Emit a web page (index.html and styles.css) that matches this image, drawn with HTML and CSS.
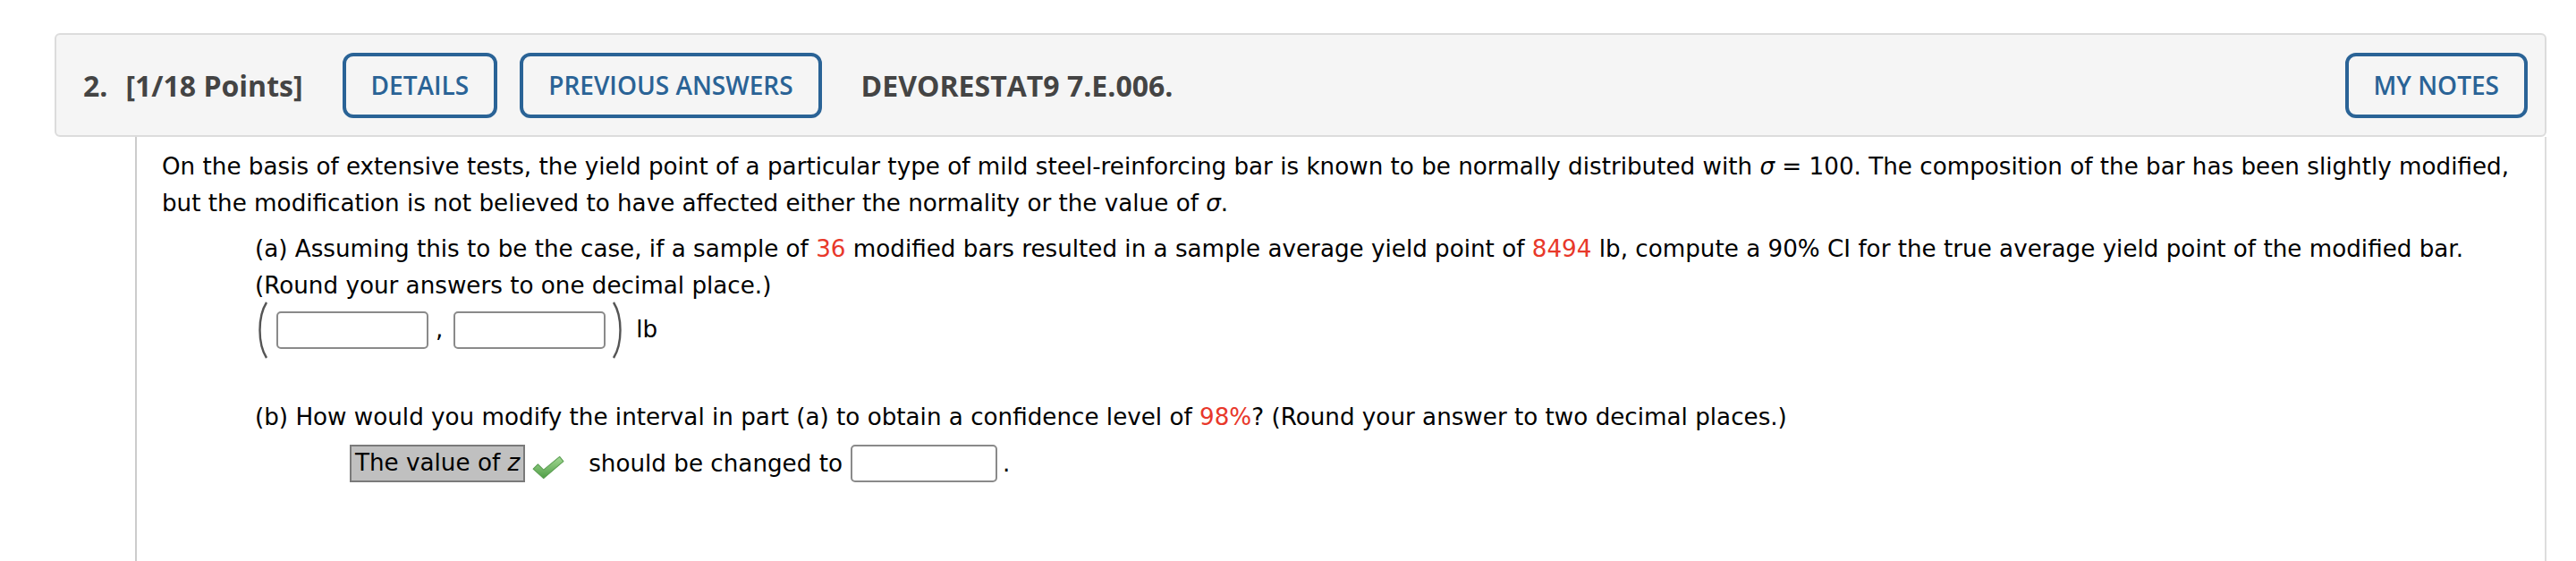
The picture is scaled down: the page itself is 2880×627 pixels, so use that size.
FILE: index.html
```html
<!DOCTYPE html>
<html lang="en">
<head>
<meta charset="utf-8">
<title>Question 2</title>
<link rel="stylesheet" href="styles.css">
</head>
<body>
<div class="question">
  <div class="qheader">
    <span class="qnum">2.</span>
    <span class="qpts">[1/18 Points]</span>
    <button class="qbtn qbtn-details">DETAILS</button>
    <button class="qbtn qbtn-prev">PREVIOUS ANSWERS</button>
    <span class="qtitle">DEVORESTAT9 7.E.006.</span>
    <button class="qbtn qbtn-notes">MY NOTES</button>
  </div>
  <div class="qbody">
    <p class="intro">On the basis of extensive tests, the yield point of a particular type of mild steel-reinforcing bar is known to be normally distributed with <i>σ</i> = 100. The composition of the bar has been slightly modified, but the modification is not believed to have affected either the normality or the value of <i>σ</i>.</p>
    <div class="part">
      <p class="ptext">(a) Assuming this to be the case, if a sample of <span class="red">36</span> modified bars resulted in a sample average yield point of <span class="red">8494</span> lb, compute a 90% CI for the true average yield point of the modified bar. (Round your answers to one decimal place.)</p>
      <div class="interval">
        <svg class="paren" width="16" height="66" viewBox="0 0 16 66"><path d="M13 2 C3 18 3 48 13 64" fill="none" stroke="#555" stroke-width="2.4"/></svg>
        <span class="ansbox"></span>
        <span class="comma">,</span>
        <span class="ansbox"></span>
        <svg class="paren" width="16" height="66" viewBox="0 0 16 66"><path d="M3 2 C13 18 13 48 3 64" fill="none" stroke="#555" stroke-width="2.4"/></svg>
        <span class="unit">lb</span>
      </div>
    </div>
    <div class="part part-b">
      <p class="ptext">(b) How would you modify the interval in part (a) to obtain a confidence level of <span class="red">98%</span>? (Round your answer to two decimal places.)</p>
      <div class="zrow">
        <span class="zsel">The value of <i>z</i></span>
        <svg class="check" width="38" height="30" viewBox="0 0 36 28">
          <defs>
            <linearGradient id="cg" x1="0" y1="0" x2="0" y2="1">
              <stop offset="0" stop-color="#a3d993"/>
              <stop offset="1" stop-color="#4f9d46"/>
            </linearGradient>
          </defs>
          <path d="M2 16 L7 11 L13 17 L30 3 L34 8 L13 26 Z" fill="url(#cg)" stroke="#5b9e52" stroke-width="1" stroke-linejoin="round"/>
        </svg>
        <span class="ztext">should be changed to</span>
        <span class="ansbox ansbox-z"></span>
        <span class="dot">.</span>
      </div>
    </div>
  </div>
</div>
</body>
</html>
```
FILE: styles.css
```css
html, body {
  margin: 0;
  padding: 0;
  background: #ffffff;
  height: 100%;
}
body {
  font-family: "DejaVu Sans", Verdana, sans-serif;
  color: #000;
}
.question {
  margin-left: 61px;
  width: 2786px;
  padding-top: 37px;
  display: flex;
  flex-direction: column;
  height: 100%;
  box-sizing: border-box;
}
.qheader {
  box-sizing: border-box;
  height: 116px;
  background: #f5f5f5;
  border: 2px solid #dcdcdc;
  border-radius: 6px;
  display: flex;
  align-items: center;
  padding: 0 19px 0 30px;
  font-family: "Open Sans", "Noto Sans", sans-serif;
  color: #444;
  flex: none;
}
.qnum {
  font-size: 32px;
  font-weight: 700;
  margin-right: 20px;
}
.qpts {
  font-size: 32px;
  font-weight: 700;
  margin-right: 44px;
}
.qbtn {
  font-family: "Open Sans", "Noto Sans", sans-serif;
  font-size: 28px;
  font-weight: 600;
  color: #2a6396;
  background: transparent;
  border: 4px solid #2a6396;
  border-radius: 12px;
  height: 73px;
  padding: 0 28px;
  box-sizing: border-box;
}
.qbtn-prev {
  margin-left: 25px;
}
.qtitle {
  font-size: 32px;
  font-weight: 700;
  margin-left: 44px;
}
.qbtn-notes {
  margin-left: auto;
}
.qbody {
  flex: 1;
  margin-left: 90px;
  border-left: 2px solid #cccccc;
  border-right: 2px solid #dddddd;
  padding: 13px 20px 0 28px;
  font-size: 26.2px;
  line-height: 41px;
}
.intro {
  margin: 0;
}
.part {
  margin: 10px 0 0 104px;
}
.ptext {
  margin: 0;
}
.red {
  color: #e8382a;
}
.interval {
  display: flex;
  align-items: center;
  height: 57px;
}
.paren {
  display: block;
  flex: none;
}
.interval .paren:first-child {
  margin-right: 8px;
}
.ansbox {
  display: inline-block;
  box-sizing: border-box;
  width: 170px;
  height: 42px;
  border: 2px solid #8a8a8a;
  border-radius: 5px;
  background: #fff;
}
.comma {
  margin: 0 12px 0 8px;
  line-height: 41px;
}
.interval .ansbox + .paren {
  margin-left: 6px;
}
.unit {
  margin-left: 12px;
}
.part-b {
  margin-top: 49px;
}
.zrow {
  display: flex;
  align-items: center;
  margin: 10px 0 0 106px;
  height: 42px;
}
.zsel {
  box-sizing: border-box;
  height: 42px;
  line-height: 37px;
  padding: 0 4px;
  background: #c0c0c0;
  border: 2px solid #7a7a7a;
}
.check {
  display: block;
  margin: 8px 0 0 7px;
}
.ztext {
  margin-left: 26px;
  margin-right: 9px;
}
.ansbox-z {
  width: 164px;
}
.dot {
  margin-left: 6px;
}
```
